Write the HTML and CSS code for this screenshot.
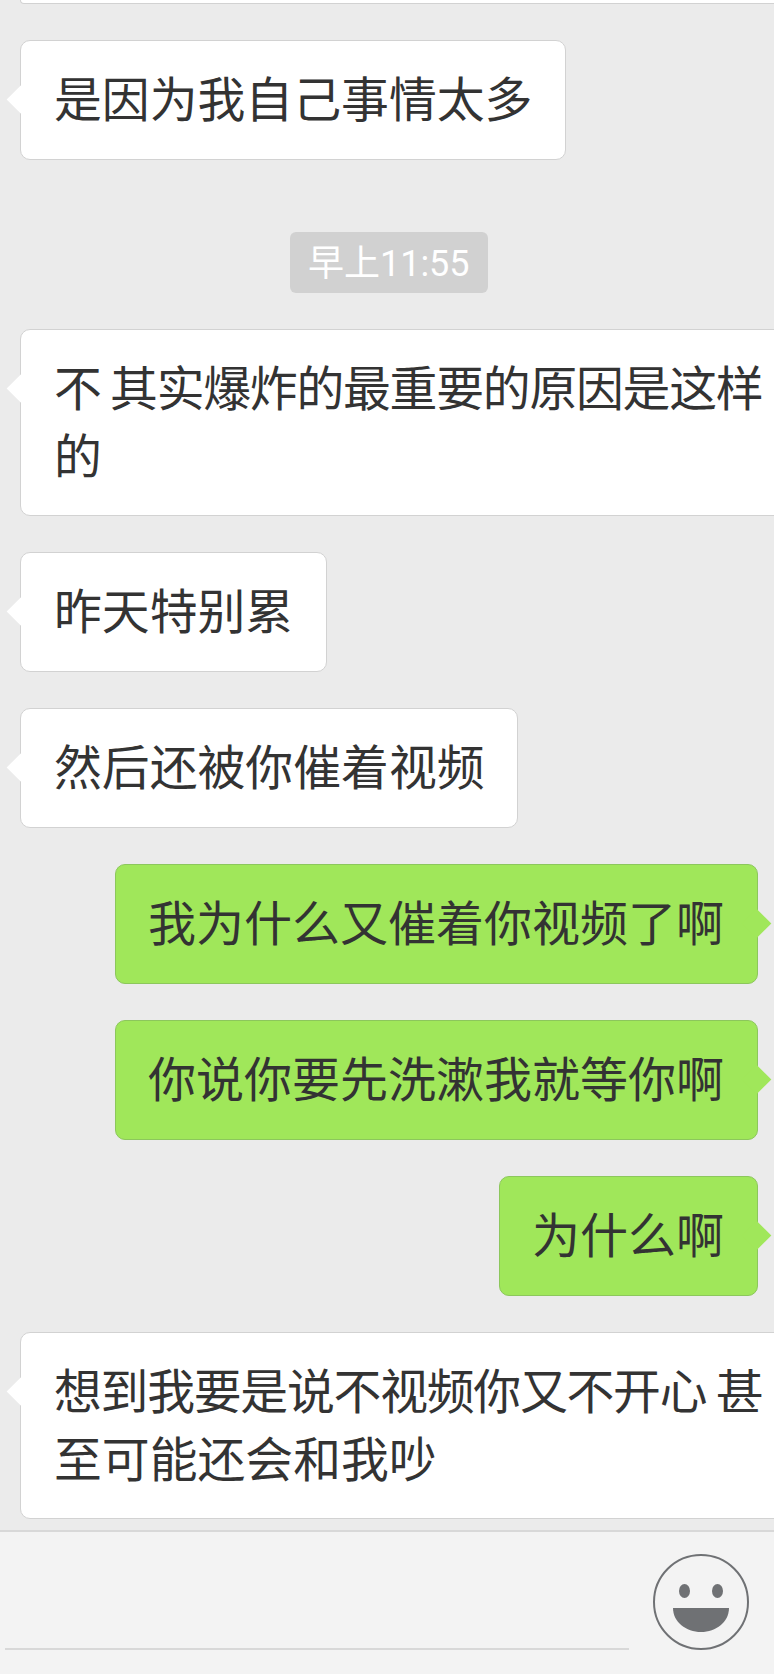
FILE: index.html
```html
<!DOCTYPE html>
<html lang="zh">
<head>
<meta charset="utf-8">
<title>聊天</title>
<link rel="stylesheet" href="styles.css">
</head>
<body>
<main class="chat">
  <div class="bubble stub"></div>
  <div class="bubble in">是因为我自己事情太多</div>
  <div class="time-row"><span class="time">早上11:55</span></div>
  <div class="bubble in wide"><span class="fit">不 其实爆炸的最重要的原因是这样</span>的</div>
  <div class="bubble in">昨天特别累</div>
  <div class="bubble in">然后还被你催着视频</div>
  <div class="bubble out">我为什么又催着你视频了啊</div>
  <div class="bubble out">你说你要先洗漱我就等你啊</div>
  <div class="bubble out">为什么啊</div>
  <div class="bubble in wide"><span class="fit">想到我要是说不视频你又不开心 甚</span>至可能还会和我吵</div>
</main>
<footer class="composer">
  <div class="input-line"></div>
  <svg class="smile" width="96" height="96" viewBox="0 0 96 96" aria-hidden="true">
    <circle cx="48" cy="48" r="47" fill="none" stroke="#6f7174" stroke-width="2"/>
    <ellipse cx="31.500" cy="37" rx="5.500" ry="7" fill="#6f7174"/>
    <ellipse cx="64.500" cy="37" rx="5.500" ry="7" fill="#6f7174"/>
    <path d="M20 54H76C76 68 63 78 48 78S20 68 20 54Z" fill="#6f7174"/>
  </svg>
</footer>
</body>
</html>
```
FILE: styles.css
```css
* { box-sizing: border-box; }
html, body { margin: 0; padding: 0; }
body {
  width: 774px;
  height: 1674px;
  overflow: hidden;
  background: #ebebeb;
  font-family: "Noto Sans CJK SC", "Liberation Sans", sans-serif;
  color: #333;
  display: flex;
  flex-direction: column;
}
.chat {
  flex: 1;
  display: flex;
  flex-direction: column;
  align-items: flex-start;
  gap: 36px;
  padding: 0 16px 0 20px;
  overflow: hidden;
}
.bubble {
  position: relative;
  flex: none;
  padding: 21px 32.500px 29px 33px;
  border: 1px solid #d2d2d2;
  border-radius: 10px;
  background: #fff;
  font-size: 47.850px;
  line-height: 68px;
  white-space: nowrap;
}
.bubble::before {
  content: "";
  position: absolute;
  top: 48px;
  width: 21px;
  height: 21px;
  background: inherit;
  transform: rotate(45deg);
}
.in::before { left: -10px; }
.out {
  align-self: flex-end;
  background: #a0e75a;
  border-color: #8cc75c;
  font-size: 48px;
  padding-left: 32px;
  padding-right: 33px;
}
.out::before { right: -10px; }
.wide {
  width: 800px;
  padding-bottom: 28px;
  white-space: normal;
}
.fit {
  display: block;
  letter-spacing: -1.250px;
  white-space: nowrap;
}
.stub {
  height: 4px;
  width: 800px;
  padding: 0;
  border-top: 0;
  border-radius: 0 0 10px 10px;
}
.stub::before { display: none; }
.time-row {
  align-self: stretch;
  display: flex;
  justify-content: center;
  margin-top: 36px;
}
.time {
  padding: 0 18px 0 17.500px;
  height: 61px;
  line-height: 64px;
  border-radius: 6px;
  background: #d1d1d1;
  color: #fff;
  font-family: Roboto, "Noto Sans CJK SC", sans-serif;
  font-size: 36px;
}
.composer {
  flex: none;
  height: 144px;
  border-top: 2px solid #d8d8d8;
  background: #f3f3f3;
  display: flex;
  align-items: flex-start;
  padding: 22px 25px 0 5px;
  gap: 24px;
}
.input-line {
  flex: 1;
  height: 2px;
  margin-top: 94px;
  background: #d8d8d8;
}
.smile { flex: none; }
```
